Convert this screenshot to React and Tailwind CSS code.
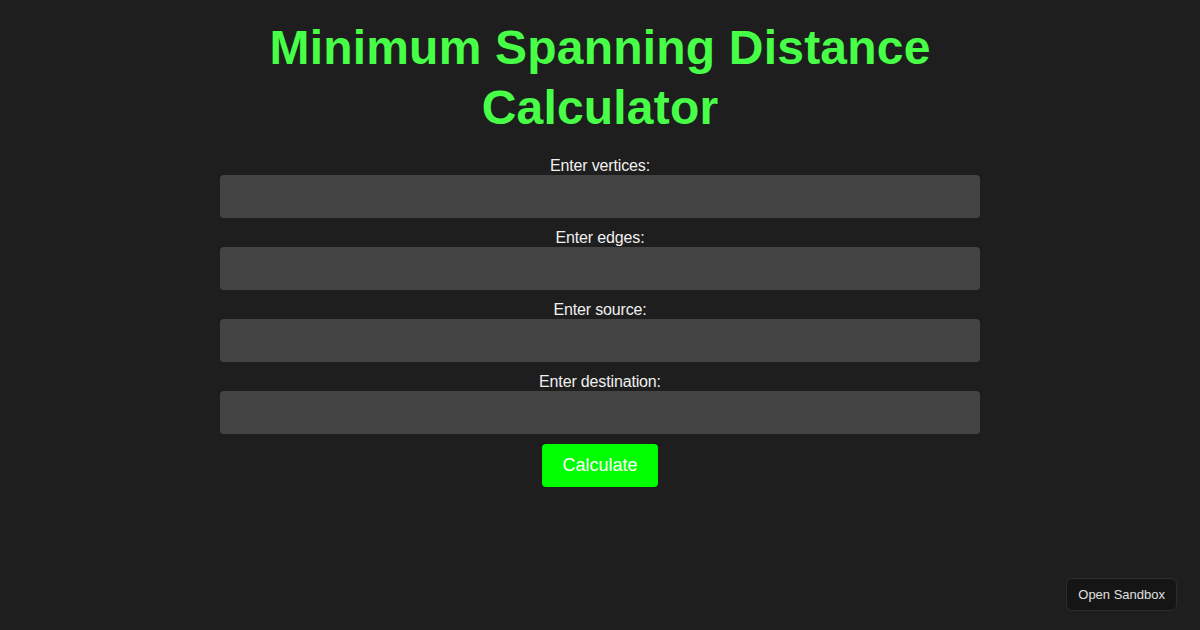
export default function App() {
  const fields = ["Enter vertices:", "Enter edges:", "Enter source:", "Enter destination:"];
  return (
    <div className="relative min-h-[630px] w-full bg-[#1e1e1e] font-['Liberation_Sans',Arial,sans-serif]">
      <div className="flex flex-col items-center pt-[18px]">
        <h1 className="text-center text-[48px] font-bold leading-[60px] tracking-[0.2px] text-[#47ff47] w-[760px]">
          Minimum Spanning Distance Calculator
        </h1>
        <div className="mt-[18px] flex w-[760px] flex-col">
          {fields.map((f) => (
            <div key={f} className="mb-[10px] flex flex-col items-center">
              <label className="text-[16px] leading-[19px] tracking-[-0.15px] text-[#f0f0f0]">{f}</label>
              <input className="h-[43px] w-full rounded-[4px] bg-[#444444] px-2 text-white outline-none" />
            </div>
          ))}
          <div className="flex justify-center">
            <button className="h-[43px] w-[116px] rounded-[4px] bg-[#00ff00] text-[18px] text-white">
              Calculate
            </button>
          </div>
        </div>
      </div>
      <button className="absolute bottom-[19px] right-[23px] h-[33px] rounded-[6px] border border-[#253225] bg-[#151515] px-[11px] text-[13px] text-[#e0e0e0]">
        Open Sandbox
      </button>
    </div>
  );
}
